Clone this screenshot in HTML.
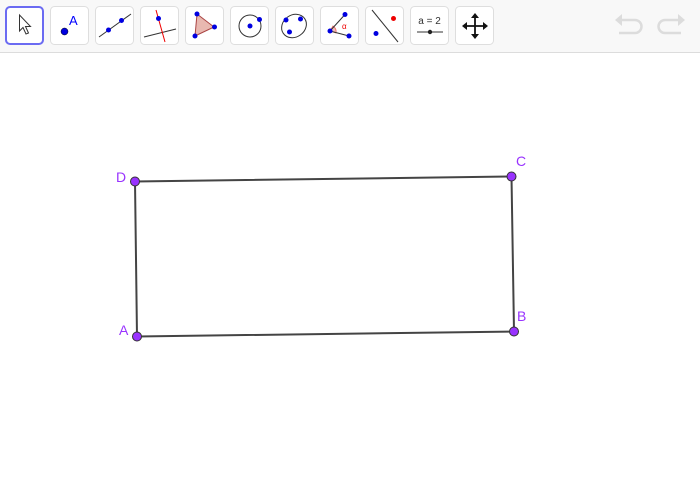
<!DOCTYPE html>
<html><head><meta charset="utf-8"><style>
html,body{margin:0;padding:0;background:#fff;width:700px;height:500px;overflow:hidden;font-family:"Liberation Sans",sans-serif}
</style></head><body>
<svg width="700" height="500" xmlns="http://www.w3.org/2000/svg" font-family="Liberation Sans, sans-serif">
<rect x="0" y="0" width="700" height="52" fill="#f8f8f8"/>
<line x1="0" y1="52.5" x2="700" y2="52.5" stroke="#dcdcdc"/>
<g fill="#fff" stroke="#dedede">
<rect x="50.5" y="6.5" width="38" height="38" rx="4"/>
<rect x="95.5" y="6.5" width="38" height="38" rx="4"/>
<rect x="140.5" y="6.5" width="38" height="38" rx="4"/>
<rect x="185.5" y="6.5" width="38" height="38" rx="4"/>
<rect x="230.5" y="6.5" width="38" height="38" rx="4"/>
<rect x="275.5" y="6.5" width="38" height="38" rx="4"/>
<rect x="320.5" y="6.5" width="38" height="38" rx="4"/>
<rect x="365.5" y="6.5" width="38" height="38" rx="4"/>
<rect x="410.5" y="6.5" width="38" height="38" rx="4"/>
<rect x="455.5" y="6.5" width="38" height="38" rx="4"/>
</g>
<rect x="6" y="7" width="37" height="37" rx="4" fill="#fff" stroke="#6b6bf2" stroke-width="2"/>
<!-- cursor -->
<path d="M19.5 15 L19.5 31 L23 27.5 L26 34 L28.5 33 L25.5 26.5 L30.5 26.5 Z" fill="#fff" stroke="#333" stroke-width="1"/>
<!-- point A -->
<circle cx="64.5" cy="31.5" r="3.5" fill="#0000e0" stroke="#000" stroke-width=".5"/>
<text x="69" y="25" font-size="13" fill="#0000ff">A</text>
<!-- line -->
<line x1="99" y1="37" x2="131" y2="14" stroke="#333"/>
<circle cx="108.5" cy="30" r="2.5" fill="#0000e0"/><circle cx="121.5" cy="20.5" r="2.5" fill="#0000e0"/>
<!-- perpendicular -->
<line x1="144" y1="37" x2="176" y2="29" stroke="#333"/>
<line x1="156" y1="10" x2="165" y2="42" stroke="#e00" />
<circle cx="158.5" cy="18.5" r="2.5" fill="#0000e0"/>
<!-- triangle -->
<path d="M197 14 L214 27 L195 36 Z" fill="#e8b8b0" stroke="#a44" stroke-width="1"/>
<circle cx="197" cy="14" r="2.5" fill="#0000e0"/><circle cx="214.5" cy="27" r="2.5" fill="#0000e0"/><circle cx="195" cy="36" r="2.5" fill="#0000e0"/>
<!-- circle -->
<circle cx="250" cy="26" r="11" fill="none" stroke="#333"/>
<circle cx="250" cy="26" r="2.5" fill="#0000e0"/><circle cx="259.5" cy="19.5" r="2.5" fill="#0000e0"/>
<!-- conic -->
<ellipse cx="294" cy="26" rx="13" ry="11" transform="rotate(-35 294 26)" fill="none" stroke="#333"/>
<circle cx="286" cy="20" r="2.5" fill="#0000e0"/><circle cx="300.5" cy="19" r="2.5" fill="#0000e0"/><circle cx="289.5" cy="32" r="2.5" fill="#0000e0"/>
<!-- angle -->
<path d="M330 31 L333 26 A7 7 0 0 1 336 33 Z" fill="#f0c0b8" stroke="#e66" stroke-width=".8"/>
<line x1="330" y1="31" x2="345" y2="14.5" stroke="#333"/><line x1="330" y1="31" x2="349" y2="36" stroke="#333"/>
<circle cx="330" cy="31" r="2.5" fill="#0000e0"/><circle cx="345" cy="14.5" r="2.5" fill="#0000e0"/><circle cx="349" cy="36" r="2.5" fill="#0000e0"/>
<text x="342" y="29" font-size="8" fill="#e00">α</text>
<!-- reflect -->
<line x1="372" y1="10" x2="398" y2="42" stroke="#333"/>
<circle cx="393.5" cy="18.5" r="2.5" fill="#e00"/><circle cx="376" cy="33.5" r="2.5" fill="#0000e0"/>
<!-- slider -->
<text x="429.5" y="24" font-size="10" fill="#333" text-anchor="middle">a = 2</text>
<line x1="417" y1="32" x2="443" y2="32" stroke="#333"/><circle cx="430" cy="32" r="2.2" fill="#222"/>
<!-- move -->
<g stroke="#111" stroke-width="1.8"><line x1="466" y1="26" x2="484" y2="26"/><line x1="475" y1="17" x2="475" y2="35"/></g>
<g fill="#111"><path d="M475 13 L479 18 L471 18Z"/><path d="M475 39 L479 34 L471 34Z"/><path d="M462 26 L467 22 L467 30Z"/><path d="M488 26 L483 22 L483 30Z"/></g>
<!-- undo/redo -->
<g fill="none" stroke="#dcdcdc" stroke-width="2.5"><path d="M620 20 H635 A6 6 0 0 1 635 33 H619"/><path d="M680 20 H665 A6 6 0 0 0 665 33 H681"/></g>
<path d="M615 20 L622 14 L622 26Z" fill="#dcdcdc"/><path d="M685 20 L678 14 L678 26Z" fill="#dcdcdc"/>
<!-- rectangle -->
<path d="M137 336.5 L514 331.5 L511.5 176.5 L135 181.5 Z" fill="none" stroke="#444" stroke-width="2"/>
<g fill="#9933ff" stroke="#333" stroke-width="1">
<circle cx="137" cy="336.5" r="4.5"/><circle cx="514" cy="331.5" r="4.5"/><circle cx="511.5" cy="176.5" r="4.5"/><circle cx="135" cy="181.5" r="4.5"/>
</g>
<g fill="#9933ff" font-size="14">
<text x="119" y="335">A</text><text x="517" y="321">B</text><text x="516" y="166">C</text><text x="116" y="182">D</text>
</g>
</svg>
</body></html>
